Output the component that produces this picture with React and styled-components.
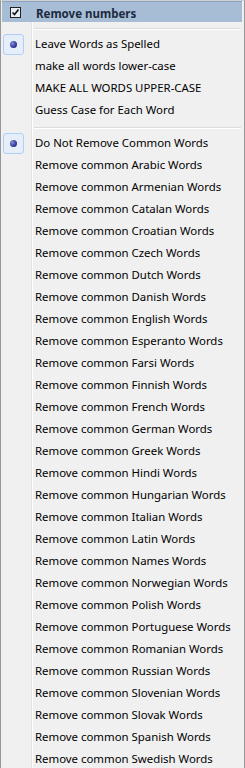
import React from "react";
import styled, { createGlobalStyle } from "styled-components";

const Global = createGlobalStyle`
  html, body { margin: 0; padding: 0; background: #f0f0f0; }
  body { font-family: "Noto Sans", sans-serif; }
`;

const Menu = styled.div`
  width: 245px;
  height: 768px;
  box-sizing: border-box;
  background: #f0f0f0;
  border-left: 1px solid #979797;
  border-right: 1px solid #979797;
  border-top: 1px solid #d0d0d0;
  overflow: hidden;
  display: flex;
  flex-direction: column;
`;

const Header = styled.div`
  height: 20px;
  margin: 0 2px 0 1px;
  background: #a7bdd6;
  border-top: 1px solid #8aa3c4;
  display: flex;
  align-items: center;
  flex-shrink: 0;
`;

const HeaderIcon = styled.div`
  width: 30px;
  display: flex;
  justify-content: center;
  padding-right: 4px;
  padding-top: 1px;
  box-sizing: border-box;
`;

const HeaderLabel = styled.span`
  font-family: "Noto Sans", sans-serif;
  font-weight: bold;
  font-size: 11.5px;
  color: #1c2a40;
  padding-left: 4px;
  padding-top: 2px;
`;

const Body = styled.div`
  display: flex;
  flex-direction: column;
`;

const Row = styled.div`
  display: flex;
  height: ${(p) => p.$h}px;
  flex-shrink: 0;
`;

const Gutter = styled.div`
  width: 28px;
  flex-shrink: 0;
  border-right: 1px solid #e2e3e3;
  box-shadow: 1px 0 0 #ffffff;
  display: flex;
  align-items: center;
  justify-content: flex-start;
  padding-left: 2px;
  box-sizing: content-box;
`;

const Label = styled.div`
  padding: 0 0 2px 3px;
  display: flex;
  align-items: center;
  font-family: "Noto Sans", sans-serif;
  font-size: 11.4px;
  color: #000;
  white-space: nowrap;
`;

const SepCell = styled.div`
  flex: 1;
  display: flex;
  align-items: flex-end;
  padding: 0 3px 3px 2px;
`;

const SepLine = styled.div`
  flex: 1;
  height: 1px;
  background: #dcdcdc;
  border-bottom: 1px solid #ffffff;
`;

const RadioBox = styled.div`
  width: 21px;
  height: 21px;
  box-sizing: border-box;
  border: 1px solid #aecff7;
  border-radius: 3px;
  background: #e6eefa;
  display: flex;
  align-items: center;
  justify-content: center;
`;

const Bullet = styled.div`
  width: 7px;
  height: 7px;
  border-radius: 50%;
  background: radial-gradient(circle at 35% 35%, #8a8fd8 0%, #30379a 60%, #1e2370 100%);
`;

const CheckIcon = () => (
  <svg width="11" height="11" viewBox="0 0 11 11">
    <rect x="0.5" y="0.5" width="10" height="10" fill="#e8eef6" stroke="#222" />
    <path d="M2.5 5.5 L4.5 7.5 L8.5 2.5" stroke="#111" strokeWidth="1.6" fill="none" />
  </svg>
);

const Item = ({ label, selected }) => (
  <Row $h={22}>
    <Gutter>
      {selected && (
        <RadioBox>
          <Bullet />
        </RadioBox>
      )}
    </Gutter>
    <Label>{label}</Label>
  </Row>
);

const Separator = ({ h }) => (
  <Row $h={h}>
    <Gutter />
    <SepCell>
      <SepLine />
    </SepCell>
  </Row>
);

const caseItems = [
  "Leave Words as Spelled",
  "make all words lower-case",
  "MAKE ALL WORDS UPPER-CASE",
  "Guess Case for Each Word",
];

const langs = [
  "Arabic", "Armenian", "Catalan", "Croatian", "Czech", "Dutch", "Danish",
  "English", "Esperanto", "Farsi", "Finnish", "French", "German", "Greek",
  "Hindi", "Hungarian", "Italian", "Latin", "Names", "Norwegian", "Polish",
  "Portuguese", "Romanian", "Russian", "Slovenian", "Slovak", "Spanish", "Swedish",
];

export default function App() {
  return (
    <>
      <Global />
      <Menu>
        <Header>
          <HeaderIcon>
            <CheckIcon />
          </HeaderIcon>
          <HeaderLabel>Remove numbers</HeaderLabel>
        </Header>
        <Body>
          <Separator h={11} />
          {caseItems.map((t, i) => (
            <Item key={t} label={t} selected={i === 0} />
          ))}
          <Separator h={11} />
          <Item label="Do Not Remove Common Words" selected />
          {langs.map((l) => (
            <Item key={l} label={`Remove common ${l} Words`} />
          ))}
        </Body>
      </Menu>
    </>
  );
}
